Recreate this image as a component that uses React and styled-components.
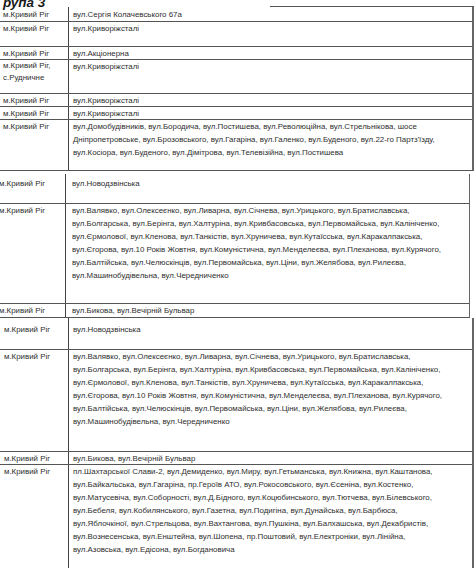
import React from "react";
import styled, { createGlobalStyle } from "styled-components";

const GlobalStyle = createGlobalStyle`
  html, body { margin: 0; padding: 0; background: #ffffff; }
  body { overflow: hidden; }
  #root { width: 474px; height: 568px; overflow: hidden; }
`;

const Page = styled.div`
  width: 474px;
  height: 568px;
  overflow: hidden;
  background: #fff;
  color: #2e2e2e;
  font-family: "Liberation Sans", Arial, sans-serif;
  font-size: 7.9px;
`;

const TitleRow = styled.div`
  display: flex;
  align-items: flex-end;
  height: 7px;
`;

const Title = styled.div`
  font-family: "Liberation Sans", Arial, sans-serif;
  font-weight: bold;
  font-style: italic;
  font-size: 13.5px;
  line-height: 13px;
  color: #1a1a1a;
  margin-left: -5px;
  margin-top: -4px;
  align-self: flex-start;
`;

const TopLine = styled.div`
  margin-left: auto;
  width: 204px;
  border-bottom: 1px solid #555;
`;

const Table = styled.div`
  margin-left: ${(p) => p.$left}px;
  margin-top: ${(p) => p.$top}px;
  width: ${(p) => p.$width}px;
  border-right: ${(p) => p.$edge} solid #666;
  border-bottom: ${(p) => (p.$bottom ? "1px solid #555" : "none")};
  box-sizing: border-box;
`;

const Row = styled.div`
  display: grid;
  grid-template-columns: ${(p) => p.$col}px 1fr;
  height: ${(p) => p.$h}px;
  border-top: ${(p) => (p.$noTop ? "none" : "1px solid #555")};
  box-sizing: border-box;
`;

const Cell = styled.div`
  padding-top: ${(p) => p.$pt || 0}px;
  padding-left: ${(p) => p.$pl}px;
  line-height: ${(p) => p.$lh || 13}px;
  white-space: nowrap;
  overflow: hidden;
`;

const LeftCell = styled(Cell)`
  border-right: 1px solid #444;
`;

const CITY = "м.Кривий Ріг";

const novo = "вул.Новодзвінська";
const valyavko = [
  "вул.Валявко, вул.Олексеєнко, вул.Ливарна, вул.Січнева, вул.Урицького, вул.Братиславська,",
  "вул.Болгарська, вул.Берінга, вул.Халтуріна, вул.Кривбасовська, вул.Первомайська, вул.Калініченко,",
  "вул.Єрмолової, вул.Кленова, вул.Танкістів, вул.Хруничева, вул.Кутаїсська, вул.Каракалпакська,",
  "вул.Єгорова, вул.10 Років Жовтня, вул.Комуністична, вул.Менделеєва, вул.Плеханова, вул.Курячого,",
  "вул.Балтійська, вул.Челюскінців, вул.Первомайська, вул.Ціни, вул.Желябова, вул.Рилеєва,",
  "вул.Машинобудівельна, вул.Чередниченко",
];
const bykova = "вул.Бикова, вул.Вечірній Бульвар";

const domo = [
  "вул.Домобудівників, вул.Бородича, вул.Постишева, вул.Революційна, вул.Стрельнікова, шосе",
  "Дніпропетровське, вул.Брозовського, вул.Гагаріна, вул.Галенко, вул.Буденого, вул.22-го Партз'їзду,",
  "вул.Косіора, вул.Буденого, вул.Дімітрова, вул.Телевізійна, вул.Постишева",
];

const shakht = [
  "пл.Шахтарської Слави-2, вул.Демиденко, вул.Миру, вул.Гетьманська, вул.Книжна, вул.Каштанова,",
  "вул.Байкальська, вул.Гагаріна, пр.Героїв АТО, вул.Рокосовського, вул.Єсеніна, вул.Костенко,",
  "вул.Матусевіча, вул.Соборності, вул.Д.Бідного, вул.Коцюбинського, вул.Тютчева, вул.Білевського,",
  "вул.Бебеля, вул.Кобилянського, вул.Газетна, вул.Подигіна, вул.Дунайська, вул.Барбюса,",
  "вул.Яблочкіної, вул.Стрельцова, вул.Вахтангова, вул.Пушкіна, вул.Балхашська, вул.Декабристів,",
  "вул.Вознесенська, вул.Енштейна, вул.Шопена, пр.Поштовий, вул.Електроніки, вул.Лінійна,",
  "вул.Азовська, вул.Едісона, вул.Богдановича",
];

const Lines = ({ lines }) =>
  lines.map((l, i) => (
    <React.Fragment key={i}>
      {l}
      {i < lines.length - 1 && <br />}
    </React.Fragment>
  ));

const section1 = [
  { h: 14, noTop: true, pt: 1, left: [CITY], right: ["вул.Сергія Колачевського 67а"] },
  { h: 25, left: [CITY], right: ["вул.Криворіжсталі"] },
  { h: 13, left: [CITY], right: ["вул.Акціонерна"] },
  { h: 34, left: ["м.Кривий Ріг,", "с.Рудничне"], lh: 11.5, right: ["вул.Криворіжсталі"] },
  { h: 13, left: [CITY], right: ["вул.Криворіжсталі"] },
  { h: 13, left: [CITY], right: ["вул.Криворіжсталі"] },
  { h: 51, left: [CITY], right: domo },
];

const section2 = [
  { h: 29, noTop: true, pt: 3, left: [CITY], right: [novo] },
  { h: 100, left: [CITY], right: valyavko },
  { h: 14, left: [CITY], right: [bykova] },
];

const section3 = [
  { h: 31, noTop: true, pt: 5, left: [CITY], right: [novo] },
  { h: 102, left: [CITY], right: valyavko },
  { h: 13, left: [CITY], right: [bykova] },
  { h: 120, left: [CITY], right: shakht },
];

const Section = ({ rows, col, pl, pr, ...rest }) => (
  <Table {...rest}>
    {rows.map((r, i) => (
      <Row key={i} $col={col} $h={r.h} $noTop={r.noTop}>
        <LeftCell $pl={pl} $pt={r.pt} $lh={r.lh}>
          <Lines lines={r.left} />
        </LeftCell>
        <Cell $pl={pr} $pt={r.pt}>
          <Lines lines={r.right} />
        </Cell>
      </Row>
    ))}
  </Table>
);

export default function App() {
  return (
    <Page>
      <GlobalStyle />
      <TitleRow>
        <Title>Група 3</Title>
        <TopLine />
      </TitleRow>
      <Section rows={section1} col={69} pl={3} pr={4} $left={0} $top={0} $width={474} $edge="2px" $bottom />
      <Section rows={section2} col={70} pl={3} pr={6} $left={-4} $top={3} $width={474} $edge="1px" $bottom />
      <Section rows={section3} col={69} pl={4} pr={4} $left={0} $top={0} $width={474} $edge="2px" />
    </Page>
  );
}
